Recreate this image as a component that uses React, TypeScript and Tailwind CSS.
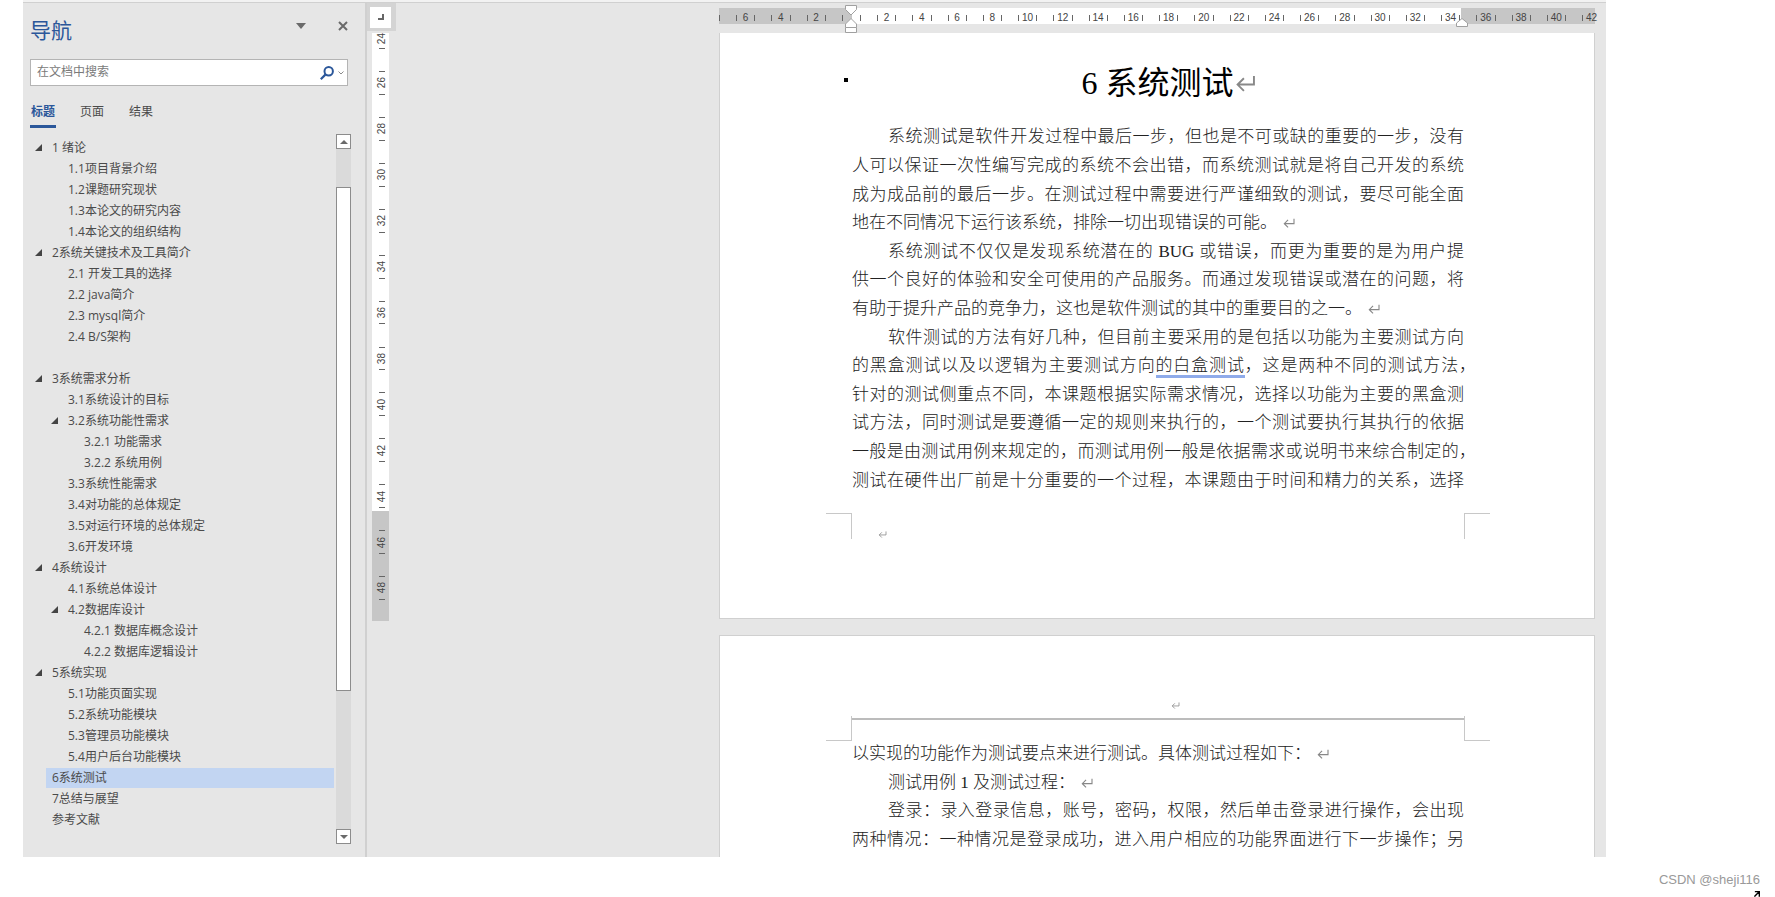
import React from "react";

type Heading = {
  text: string;
  level: 1 | 2 | 3;
  open?: boolean;
  current?: boolean;
};

const headings: Heading[] = [
  { text: "1 绪论", level: 1, open: true },
  { text: "1.1项目背景介绍", level: 2 },
  { text: "1.2课题研究现状", level: 2 },
  { text: "1.3本论文的研究内容", level: 2 },
  { text: "1.4本论文的组织结构", level: 2 },
  { text: "2系统关键技术及工具简介", level: 1, open: true },
  { text: "2.1 开发工具的选择", level: 2 },
  { text: "2.2 java简介", level: 2 },
  { text: "2.3 mysql简介", level: 2 },
  { text: "2.4 B/S架构", level: 2 },
  { text: "", level: 1 },
  { text: "3系统需求分析", level: 1, open: true },
  { text: "3.1系统设计的目标", level: 2 },
  { text: "3.2系统功能性需求", level: 2, open: true },
  { text: "3.2.1 功能需求", level: 3 },
  { text: "3.2.2 系统用例", level: 3 },
  { text: "3.3系统性能需求", level: 2 },
  { text: "3.4对功能的总体规定", level: 2 },
  { text: "3.5对运行环境的总体规定", level: 2 },
  { text: "3.6开发环境", level: 2 },
  { text: "4系统设计", level: 1, open: true },
  { text: "4.1系统总体设计", level: 2 },
  { text: "4.2数据库设计", level: 2, open: true },
  { text: "4.2.1 数据库概念设计", level: 3 },
  { text: "4.2.2 数据库逻辑设计", level: 3 },
  { text: "5系统实现", level: 1, open: true },
  { text: "5.1功能页面实现", level: 2 },
  { text: "5.2系统功能模块", level: 2 },
  { text: "5.3管理员功能模块", level: 2 },
  { text: "5.4用户后台功能模块", level: 2 },
  { text: "6系统测试", level: 1, current: true },
  { text: "7总结与展望", level: 1 },
  { text: "参考文献", level: 1 },
];

const levelPad = { 1: "pl-[12px]", 2: "pl-[28px]", 3: "pl-[44px]" };

function ReturnMark({ className }: { className: string }) {
  return (
    <svg viewBox="0 0 18 16" className={className} fill="none" stroke="currentColor" strokeWidth="1.8" aria-hidden="true">
      <path d="M17 1v8H1.5M7.500 3 1.500 9l6 6" />
    </svg>
  );
}

function HeadingRow({ item }: { item: Heading }) {
  return (
    <li className={`flex h-[21px] items-center ${levelPad[item.level]}`}>
      <span className="flex w-[11px] shrink-0">
        {item.open && (
          <svg viewBox="0 0 8 8" className="size-[7px] text-[#444]" aria-hidden="true">
            <path d="M8 0v8H0z" fill="currentColor" />
          </svg>
        )}
      </span>
      <a
        href="#"
        className={`flex h-5 flex-1 items-center whitespace-pre pl-[6px] ${item.current ? "bg-[#c2d5f2]" : ""}`}
      >
        {item.text}
      </a>
    </li>
  );
}

function Navigation() {
  return (
    <aside className="flex w-[344px] shrink-0 flex-col border-r-2 border-[#d0d0d0] font-['Open_Sans','Noto_Sans_CJK_SC',sans-serif] text-[12px] text-[#4a4a4a]">
      <header className="flex h-[56px] items-center pb-[2px] pl-[7px] pr-[17px]">
        <h1 className="flex-1 text-[21px] leading-6 text-[#2b579a]">导航</h1>
        <button aria-label="任务窗格选项" className="mr-[32px] -mt-2">
          <svg viewBox="0 0 10 6" className="h-[6px] w-[10px]" aria-hidden="true">
            <path d="M0 0h10L5 6z" fill="#6a6a6a" />
          </svg>
        </button>
        <button aria-label="关闭" className="-mt-2">
          <svg viewBox="0 0 10 10" className="size-[10px]" stroke="#6a6a6a" strokeWidth="2" aria-hidden="true">
            <path d="M1 1l8 8M9 1l-8 8" />
          </svg>
        </button>
      </header>

      <div className="ml-[7px] mr-[17px] flex h-[27px] items-center border border-[#b4b4b4] bg-white pl-[6px] pr-[3px]">
        <input
          aria-label="在文档中搜索"
          placeholder="在文档中搜索"
          className="min-w-0 flex-1 bg-transparent pb-[2px] outline-none placeholder:text-[#7a7a7a]"
        />
        <button aria-label="搜索">
          <svg viewBox="0 0 14 14" className="size-[14px]" fill="none" stroke="#2b579a" strokeWidth="2" aria-hidden="true">
            <circle cx="8.7" cy="5.3" r="4.2" />
            <path d="M5.6 8.4.8 13.2" strokeWidth="2.2" />
          </svg>
        </button>
        <button aria-label="搜索选项" className="ml-[4px]">
          <svg viewBox="0 0 6 4" className="h-[4px] w-[6px]" fill="none" stroke="#8a8a8a" aria-hidden="true">
            <path d="M.5.5 3 3 5.5.5" />
          </svg>
        </button>
      </div>

      <nav className="flex gap-[23px] pl-[7px] pt-[15px]">
        <button className="border-b-[3px] border-[#2b579a] px-[1px] pb-[2px] font-bold leading-[22px] text-[#2b579a]">标题</button>
        <button className="self-start px-[1px] leading-[22px]">页面</button>
        <button className="self-start px-[1px] leading-[22px]">结果</button>
      </nav>

      <div className="mt-[6px] flex pb-3">
        <ul className="flex-1 pb-[14px] pt-[3px]">
          {headings.map((item, i) => (
            <HeadingRow key={i} item={item} />
          ))}
        </ul>
        <div className="ml-[2px] mr-[14px] flex w-[15px] shrink-0 flex-col bg-[#dadada]">
          <button aria-label="向上滚动" className="flex h-[15px] items-center justify-center border border-[#8c8c8c] bg-white">
            <svg viewBox="0 0 8 4" className="h-[4px] w-[8px]" aria-hidden="true">
              <path d="M0 4h8L4 0z" fill="#6a6a6a" />
            </svg>
          </button>
          <div className="h-[38px]" />
          <div className="h-[504px] border border-[#8c8c8c] bg-white" />
          <div className="flex-1" />
          <button aria-label="向下滚动" className="flex h-[15px] items-center justify-center border border-[#8c8c8c] bg-white">
            <svg viewBox="0 0 8 4" className="h-[4px] w-[8px]" aria-hidden="true">
              <path d="M0 0h8L4 4z" fill="#6a6a6a" />
            </svg>
          </button>
        </div>
      </div>
    </aside>
  );
}

const verticalMarks = [26, 28, 30, 32, 34, 36, 38, 40, 42, 44, 46, 48];

function VerticalRuler() {
  return (
    <div className="flex w-[29px] shrink-0 flex-col font-['Liberation_Sans',sans-serif] text-[10px] text-[#444]">
      <div className="flex h-[28px] items-center justify-center bg-[#d4d4d4] pr-[2px]">
        <button aria-label="左对齐制表符" className="flex h-[21px] w-[21px] items-center justify-center bg-white">
          <svg viewBox="0 0 6 6" className="size-[6px]" fill="none" stroke="#666" strokeWidth="2" aria-hidden="true">
            <path d="M5 0v5H0" />
          </svg>
        </button>
      </div>
      <div className="ml-[5px] mt-[2px] grid h-[588px] w-[17px]">
        <div className="col-start-1 row-start-1 flex flex-col">
          <div className="h-[478px] bg-white" />
          <div className="flex-1 bg-[#c6c6c6]" />
        </div>
        <div className="col-start-1 row-start-1 flex flex-col pl-[2px]">
          <div className="flex h-[27px] flex-col items-center justify-between pb-[11px]">
            <span className="leading-[12px] [writing-mode:sideways-lr]">24</span>
            <i className="h-px w-[6px] bg-[#666]" />
          </div>
          <div className="grid flex-1 auto-rows-fr">
            {verticalMarks.map((n) => (
              <div key={n} className="flex flex-col items-center justify-between py-[11px]">
                <i className="h-px w-[6px] bg-[#666]" />
                <span className="leading-[12px] [writing-mode:sideways-lr]">{n}</span>
                <i className="h-px w-[6px] bg-[#666]" />
              </div>
            ))}
          </div>
          <div className="h-[10px]" />
        </div>
      </div>
    </div>
  );
}

const horizontalMarks = [
  "6", "4", "2", "", "2", "4", "6", "8", "10", "12", "14", "16", "18", "20", "22", "24", "26", "28", "30", "32", "34",
  "36", "38", "40",
];

function HorizontalRuler() {
  return (
    <div className="relative grid h-4 font-['Liberation_Sans',sans-serif] text-[10px] leading-[14px] text-[#444]">
      <div className="col-start-1 row-start-1 flex h-4">
        <div className="w-[133px] bg-[#c6c6c6]" />
        <div className="flex-1 bg-white" />
        <div className="w-[134px] bg-[#c6c6c6]" />
      </div>
      <div className="col-start-1 row-start-1 flex h-4 items-center pt-[3px]">
        <i className="mr-2 h-[6px] w-px bg-[#666]" />
        <div className="grid flex-1 auto-cols-fr grid-flow-col">
          {horizontalMarks.map((n, i) => (
            <div key={i} className="flex items-center justify-between px-2">
              <i className="h-[6px] w-px bg-[#666]" />
              <span>{n}</span>
              <i className="h-[6px] w-px bg-[#666]" />
            </div>
          ))}
        </div>
        <div className="flex w-[21px] items-center gap-[3px] pl-2">
          <i className="h-[6px] w-px shrink-0 bg-[#666]" />
          <span>42</span>
        </div>
      </div>
      <svg viewBox="0 0 12 28" className="absolute -top-[3px] left-[126px] h-7 w-3" fill="#fff" stroke="#a0a0a0" aria-hidden="true">
        <path d="M.5.5h11v4L6 10 .5 4.500z" />
        <path d="M6 13.500l5.500 5.500v3.500H.5V19z" />
        <path d="M.5 22.500h11v5H.5z" />
      </svg>
      <svg viewBox="0 0 12 9" className="absolute right-[127px] top-[10px] h-[9px] w-3" fill="#fff" stroke="#a0a0a0" aria-hidden="true">
        <path d="M6 .5l5.500 4.500v3.500H.5V5z" />
      </svg>
    </div>
  );
}

type LineProps = { children: React.ReactNode; indent?: boolean; last?: boolean; hang?: boolean };

function Line({ children, indent, last, hang }: LineProps) {
  return (
    <span
      className={`flex items-center whitespace-nowrap ${indent ? "pl-[36px]" : ""} ${hang ? "-mr-[12px]" : ""}`}
    >
      <span className={last ? "" : "flex-1 [text-align-last:justify]"}>{children}</span>
      {last && <ReturnMark className="ml-[6px] h-[10px] w-[12px] text-[#888]" />}
    </span>
  );
}

function PageOne() {
  return (
    <article className="border border-t-0 border-[#d0d0d0] bg-white pb-[70px] pl-[132px] pr-[130px]">
      <div className="relative flex h-[90px] items-center justify-center pl-[20px] pt-[10px]">
        <i className="absolute -left-[8px] top-[45px] size-1 bg-black" />
        <h2 className="text-[32px] leading-10 text-black">
          6 <span className="font-normal">系统测试</span>
        </h2>
        <ReturnMark className="ml-[2px] h-[17px] w-[19px] text-[#888]" />
      </div>
      <div className="grid h-[372px] auto-rows-fr">
        <p className="contents">
          <Line indent>系统测试是软件开发过程中最后一步，但也是不可或缺的重要的一步，没有</Line>
          <Line>人可以保证一次性编写完成的系统不会出错，而系统测试就是将自己开发的系统</Line>
          <Line>成为成品前的最后一步。在测试过程中需要进行严谨细致的测试，要尽可能全面</Line>
          <Line last>地在不同情况下运行该系统，排除一切出现错误的可能。</Line>
        </p>
        <p className="contents">
          <Line indent>系统测试不仅仅是发现系统潜在的 BUG 或错误，而更为重要的是为用户提</Line>
          <Line>供一个良好的体验和安全可使用的产品服务。而通过发现错误或潜在的问题，将</Line>
          <Line last>有助于提升产品的竞争力，这也是软件测试的其中的重要目的之一。</Line>
        </p>
        <p className="contents">
          <Line indent>软件测试的方法有好几种，但目前主要采用的是包括以功能为主要测试方向</Line>
          <Line hang>
            的黑盒测试以及以逻辑为主要测试方向
            <span className="border-b-[3px] border-[#8fabea]">的白盒测试</span>，这是两种不同的测试方法，
          </Line>
          <Line>针对的测试侧重点不同，本课题根据实际需求情况，选择以功能为主要的黑盒测</Line>
          <Line>试方法，同时测试是要遵循一定的规则来执行的，一个测试要执行其执行的依据</Line>
          <Line hang>一般是由测试用例来规定的，而测试用例一般是依据需求或说明书来综合制定的，</Line>
          <Line>测试在硬件出厂前是十分重要的一个过程，本课题由于时间和精力的关系，选择</Line>
        </p>
      </div>
      <footer className="-mx-[26px] mt-[18px] flex h-[35px] items-start">
        <i className="size-[26px] border-r border-t border-[#c8c8c8]" />
        <span className="flex-1 pl-[26px] pt-[18px]">
          <ReturnMark className="h-[7px] w-[9px] text-[#888]" />
        </span>
        <i className="size-[26px] border-l border-t border-[#c8c8c8]" />
      </footer>
    </article>
  );
}

function PageTwo() {
  return (
    <article className="mt-[16px] border border-b-0 border-[#d0d0d0] bg-white pb-[3px] pl-[132px] pr-[130px] pt-[66px]">
      <header className="-mx-[26px]">
        <div className="flex h-[14px] justify-center pl-[34px]">
          <ReturnMark className="h-[7px] w-[9px] text-[#888]" />
        </div>
        <div className="flex h-[25px]">
          <i className="w-[26px] border-b border-r border-[#c8c8c8]" />
          <i className="mt-[2px] h-[2px] flex-1 bg-[#bcbcbc]" />
          <i className="w-[26px] border-b border-l border-[#c8c8c8]" />
        </div>
      </header>
      <div className="-mt-px grid h-[114px] auto-rows-fr">
        <p className="contents">
          <Line last>以实现的功能作为测试要点来进行测试。具体测试过程如下：</Line>
        </p>
        <p className="contents">
          <Line indent last>测试用例 1 及测试过程：</Line>
        </p>
        <p className="contents">
          <Line indent>登录：录入登录信息，账号，密码，权限，然后单击登录进行操作，会出现</Line>
          <Line>两种情况：一种情况是登录成功，进入用户相应的功能界面进行下一步操作；另</Line>
        </p>
      </div>
    </article>
  );
}

export default function App() {
  return (
    <div className="flex min-h-screen flex-col overflow-hidden bg-white">
      <main className="ml-[23px] mr-[169px] border-t-2 border-[#f2f2f2] bg-[#e6e6e6]">
        <div className="flex border-t border-[#d0d0d0]">
          <Navigation />
          <VerticalRuler />
          <section className="ml-auto mr-[11px] flex w-full max-w-[876px] flex-col pt-[5px] font-['Liberation_Serif','Noto_Sans_CJK_SC',serif] text-[17px] leading-[22px] text-[#222]">
            <HorizontalRuler />
            <div className="flex flex-1 flex-col pt-[9px] font-light [&>article:last-child]:flex-1">
              <PageOne />
              <PageTwo />
            </div>
          </section>
        </div>
      </main>
      <footer className="flex flex-1 flex-col items-end pr-[15px] pt-[14px] font-['Liberation_Sans',sans-serif] text-[13px] leading-[18px] text-[#999]">
        <span>CSDN @sheji116</span>
        <svg viewBox="0 0 7 7" className="mt-[2px] size-[6px]" fill="none" stroke="#000" strokeWidth="1.6" aria-hidden="true">
          <path d="M1 .8h5.200v6M6 1 .5 6.500" />
        </svg>
      </footer>
    </div>
  );
}
